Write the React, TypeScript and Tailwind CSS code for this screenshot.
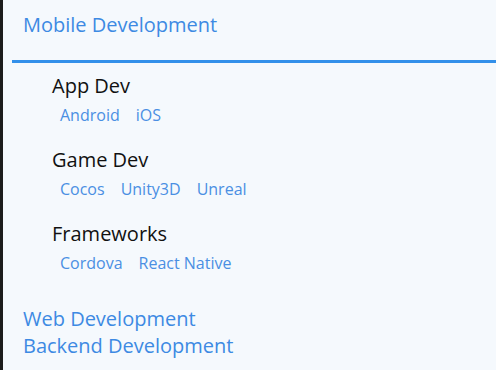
const groups = [
  { title: "App Dev", links: ["Android", "iOS"] },
  { title: "Game Dev", links: ["Cocos", "Unity3D", "Unreal"] },
  { title: "Frameworks", links: ["Cordova", "React Native"] },
];

export default function App() {
  return (
    <div
      className="h-[370px] w-[496px] overflow-hidden border-l-[3px] border-[#1c1c1c] bg-[#f5f9fd]"
      style={{ fontFamily: '"Open Sans", sans-serif' }}
    >
      {/* Active menu item */}
      <div className="pt-[11px] pl-5 text-[20px] leading-[28px] text-[#3d8ae3]">
        Mobile Development
      </div>
      <div className="mt-[21px] ml-[9px] flex flex-col gap-[21px] border-t-[3px] border-[#3390ea] pt-[11px] pb-[30px] pl-10">
        {groups.map((g) => (
          <div key={g.title} className="flex flex-col gap-[5px]">
            <div className="text-[20px] leading-[24px] text-[#111]">{g.title}</div>
            <div className="flex">
              {g.links.map((l) => (
                <a
                  key={l}
                  href="#"
                  className="px-2 text-[16px] leading-[24px] text-[#4a8fe3]"
                >
                  {l}
                </a>
              ))}
            </div>
          </div>
        ))}
      </div>

      {/* Other menu items */}
      <div className="pl-5 text-[20px] leading-[27px] text-[#3d8ae3]">
        <div>Web Development</div>
        <div>Backend Development</div>
      </div>
    </div>
  );
}
